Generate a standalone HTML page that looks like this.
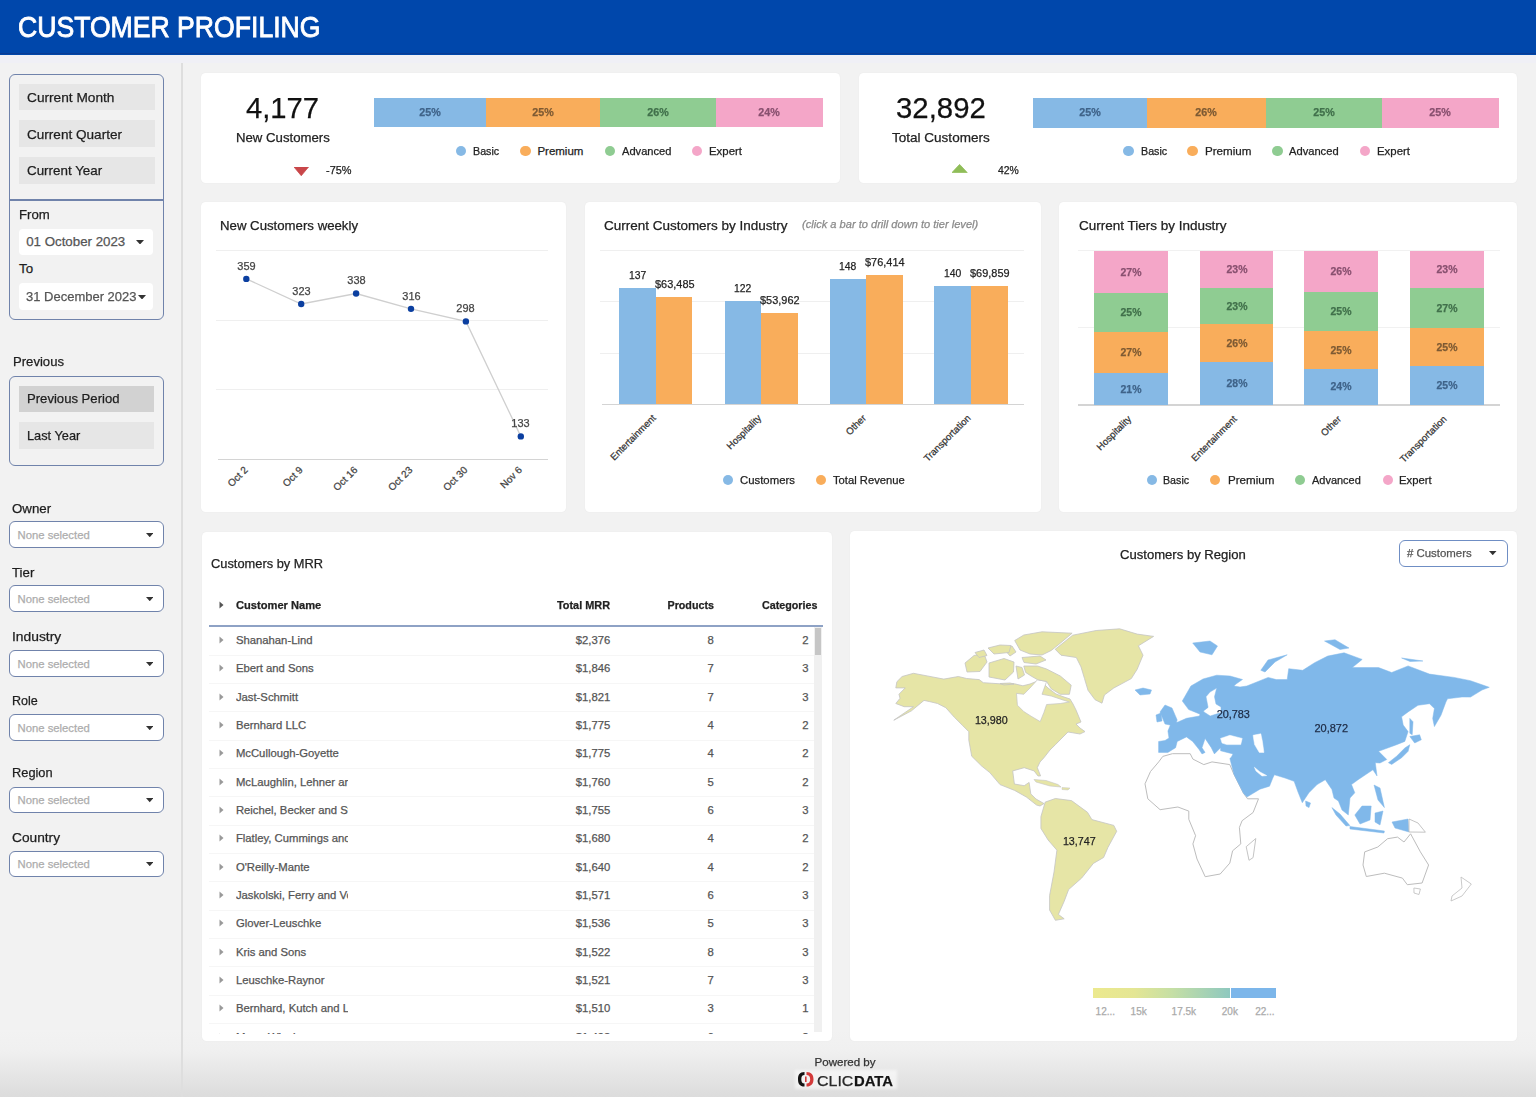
<!DOCTYPE html><html><head><meta charset="utf-8"><title>Customer Profiling</title>
<style>
html,body{margin:0;padding:0;}
body{width:1536px;height:1097px;position:relative;overflow:hidden;background:#f2f2f2;font-family:"Liberation Sans",sans-serif;}
.t{position:absolute;white-space:nowrap;line-height:1;-webkit-text-stroke:0.25px currentColor;}
.b{position:absolute;box-sizing:border-box;}
svg{position:absolute;left:0;top:0;}
</style></head><body>
<div class="b" style="left:0.00px;top:1030.00px;width:1536.00px;height:67.00px;background:linear-gradient(#f2f2f2,#f0f0f0 30%,#dcdcdc);"></div>
<div class="b" style="left:181.00px;top:62.00px;width:1.50px;height:1035.00px;background:#dedede;"></div>
<div class="b" style="left:0.00px;top:54.00px;width:1536.00px;height:9.00px;background:#f0f0f6;"></div>
<div class="b" style="left:0.00px;top:0.00px;width:1536.00px;height:54.50px;background:#0047ab;"></div>
<div class="b" style="left:0.00px;top:53.30px;width:1536.00px;height:1.20px;background:#0a3c94;"></div>
<div class="t" style="top:12.02px;font-size:30.20px;color:#fff;left:17.60px;transform-origin:0 0;transform:scaleX(0.8811);-webkit-text-stroke:0.9px #fff;">CUSTOMER PROFILING</div>
<div class="b" style="left:9.30px;top:73.70px;width:154.50px;height:246.60px;border:1.5px solid #7083ab;border-radius:6px;"></div>
<div class="b" style="left:19.00px;top:84.00px;width:135.50px;height:26.30px;background:#e6e6e6;"></div>
<div class="t" style="top:91.13px;font-size:13.30px;color:#1e1e1e;left:26.70px;transform-origin:0 0;transform:scaleX(1.0293);">Current Month</div>
<div class="b" style="left:19.00px;top:120.30px;width:135.50px;height:26.70px;background:#e6e6e6;"></div>
<div class="t" style="top:127.73px;font-size:13.30px;color:#1e1e1e;left:26.70px;transform-origin:0 0;transform:scaleX(1.0200);">Current Quarter</div>
<div class="b" style="left:19.00px;top:157.00px;width:135.50px;height:27.00px;background:#e6e6e6;"></div>
<div class="t" style="top:164.23px;font-size:13.30px;color:#1e1e1e;left:26.70px;transform-origin:0 0;transform:scaleX(1.0070);">Current Year</div>
<div class="b" style="left:9.30px;top:199.30px;width:154.50px;height:1.50px;background:#7083ab;"></div>
<div class="t" style="top:208.03px;font-size:13.30px;color:#1e1e1e;left:19.10px;transform-origin:0 0;transform:scaleX(0.9926);">From</div>
<div class="b" style="left:19.00px;top:228.50px;width:134.00px;height:26.50px;background:#fff;border-radius:4px;"></div>
<div class="t" style="top:235.43px;font-size:13.30px;color:#555;left:26.20px;transform-origin:0 0;">01 October 2023</div>
<svg style="left:136.00px;top:239.75px" width="8.00" height="4.50"><polygon points="0,0 8.00,0 4.00,4.50" fill="#333"/></svg>
<div class="t" style="top:262.33px;font-size:13.30px;color:#1e1e1e;left:19.10px;transform-origin:0 0;">To</div>
<div class="b" style="left:19.00px;top:283.00px;width:134.00px;height:27.00px;background:#fff;border-radius:4px;"></div>
<div class="t" style="top:289.73px;font-size:13.30px;color:#555;left:26.20px;transform-origin:0 0;transform:scaleX(0.9768);">31 December 2023</div>
<svg style="left:137.50px;top:294.75px" width="8.00" height="4.50"><polygon points="0,0 8.00,0 4.00,4.50" fill="#333"/></svg>
<div class="t" style="top:355.43px;font-size:13.30px;color:#1e1e1e;left:12.60px;transform-origin:0 0;transform:scaleX(0.9856);">Previous</div>
<div class="b" style="left:9.30px;top:375.50px;width:154.50px;height:90.80px;border:1.5px solid #7083ab;border-radius:6px;"></div>
<div class="b" style="left:19.00px;top:385.80px;width:135.30px;height:26.00px;background:#d2d2d2;"></div>
<div class="t" style="top:391.93px;font-size:13.30px;color:#1e1e1e;left:26.50px;transform-origin:0 0;transform:scaleX(0.9852);">Previous Period</div>
<div class="b" style="left:19.00px;top:422.00px;width:135.30px;height:26.70px;background:#e6e6e6;"></div>
<div class="t" style="top:428.53px;font-size:13.30px;color:#1e1e1e;left:26.50px;transform-origin:0 0;transform:scaleX(0.9609);">Last Year</div>
<div class="t" style="top:501.79px;font-size:13.00px;color:#1e1e1e;left:12.40px;transform-origin:0 0;transform:scaleX(1.0212);">Owner</div>
<div class="b" style="left:9.30px;top:521.40px;width:154.50px;height:27.10px;background:#fff;border:1.5px solid #7083ab;border-radius:6px;"></div>
<div class="t" style="top:530.18px;font-size:11.30px;color:#adadad;left:17.50px;transform-origin:0 0;">None selected</div>
<svg style="left:145.55px;top:533.15px" width="7.50" height="4.20"><polygon points="0,0 7.50,0 3.75,4.20" fill="#333"/></svg>
<div class="t" style="top:565.59px;font-size:13.00px;color:#1e1e1e;left:12.40px;transform-origin:0 0;transform:scaleX(1.0180);">Tier</div>
<div class="b" style="left:9.30px;top:585.40px;width:154.50px;height:26.90px;background:#fff;border:1.5px solid #7083ab;border-radius:6px;"></div>
<div class="t" style="top:594.08px;font-size:11.30px;color:#adadad;left:17.50px;transform-origin:0 0;">None selected</div>
<svg style="left:145.55px;top:597.05px" width="7.50" height="4.20"><polygon points="0,0 7.50,0 3.75,4.20" fill="#333"/></svg>
<div class="t" style="top:629.89px;font-size:13.00px;color:#1e1e1e;left:12.40px;transform-origin:0 0;transform:scaleX(1.0639);">Industry</div>
<div class="b" style="left:9.30px;top:650.00px;width:154.50px;height:26.80px;background:#fff;border:1.5px solid #7083ab;border-radius:6px;"></div>
<div class="t" style="top:658.63px;font-size:11.30px;color:#adadad;left:17.50px;transform-origin:0 0;">None selected</div>
<svg style="left:145.55px;top:661.60px" width="7.50" height="4.20"><polygon points="0,0 7.50,0 3.75,4.20" fill="#333"/></svg>
<div class="t" style="top:693.89px;font-size:13.00px;color:#1e1e1e;left:12.40px;transform-origin:0 0;transform:scaleX(0.9650);">Role</div>
<div class="b" style="left:9.30px;top:714.00px;width:154.50px;height:26.60px;background:#fff;border:1.5px solid #7083ab;border-radius:6px;"></div>
<div class="t" style="top:722.53px;font-size:11.30px;color:#adadad;left:17.50px;transform-origin:0 0;">None selected</div>
<svg style="left:145.55px;top:725.50px" width="7.50" height="4.20"><polygon points="0,0 7.50,0 3.75,4.20" fill="#333"/></svg>
<div class="t" style="top:766.39px;font-size:13.00px;color:#1e1e1e;left:12.40px;transform-origin:0 0;transform:scaleX(0.9855);">Region</div>
<div class="b" style="left:9.30px;top:786.80px;width:154.50px;height:26.70px;background:#fff;border:1.5px solid #7083ab;border-radius:6px;"></div>
<div class="t" style="top:795.38px;font-size:11.30px;color:#adadad;left:17.50px;transform-origin:0 0;">None selected</div>
<svg style="left:145.55px;top:798.35px" width="7.50" height="4.20"><polygon points="0,0 7.50,0 3.75,4.20" fill="#333"/></svg>
<div class="t" style="top:831.19px;font-size:13.00px;color:#1e1e1e;left:12.40px;transform-origin:0 0;transform:scaleX(1.0545);">Country</div>
<div class="b" style="left:9.30px;top:850.70px;width:154.50px;height:26.70px;background:#fff;border:1.5px solid #7083ab;border-radius:6px;"></div>
<div class="t" style="top:859.28px;font-size:11.30px;color:#adadad;left:17.50px;transform-origin:0 0;">None selected</div>
<svg style="left:145.55px;top:862.25px" width="7.50" height="4.20"><polygon points="0,0 7.50,0 3.75,4.20" fill="#333"/></svg>
<div class="b" style="left:201.30px;top:73.00px;width:639.20px;height:109.60px;background:#fff;border-radius:4.5px;box-shadow:0 0 1.5px rgba(0,0,0,0.06);"></div>
<div class="b" style="left:859.40px;top:73.00px;width:657.40px;height:109.60px;background:#fff;border-radius:4.5px;box-shadow:0 0 1.5px rgba(0,0,0,0.06);"></div>
<div class="b" style="left:201.00px;top:201.50px;width:365.20px;height:310.30px;background:#fff;border-radius:4.5px;box-shadow:0 0 1.5px rgba(0,0,0,0.06);"></div>
<div class="b" style="left:585.00px;top:201.50px;width:456.00px;height:310.30px;background:#fff;border-radius:4.5px;box-shadow:0 0 1.5px rgba(0,0,0,0.06);"></div>
<div class="b" style="left:1059.40px;top:201.50px;width:457.20px;height:310.30px;background:#fff;border-radius:4.5px;box-shadow:0 0 1.5px rgba(0,0,0,0.06);"></div>
<div class="b" style="left:201.50px;top:531.50px;width:630.30px;height:509.80px;background:#fff;border-radius:4.5px;box-shadow:0 0 1.5px rgba(0,0,0,0.06);"></div>
<div class="b" style="left:849.80px;top:530.50px;width:667.40px;height:510.80px;background:#fff;border-radius:4.5px;box-shadow:0 0 1.5px rgba(0,0,0,0.06);"></div>
<div class="t" style="top:92.59px;font-size:30.00px;color:#111;left:246.00px;transform-origin:0 0;transform:scaleX(0.9724);">4,177</div>
<div class="t" style="top:131.29px;font-size:13.00px;color:#222;left:236.20px;transform-origin:0 0;transform:scaleX(1.0144);">New Customers</div>
<svg style="left:294px;top:166.5px" width="15" height="9"><polygon points="0,0 14.5,0 7.25,8.7" fill="#c9474a" stroke="#c9474a" stroke-width="0.8" stroke-linejoin="round"/></svg>
<div class="t" style="top:164.68px;font-size:11.00px;color:#222;left:326.00px;transform-origin:0 0;transform:scaleX(0.9930);">-75%</div>
<div class="b" style="left:374.40px;top:97.80px;width:111.70px;height:29.70px;background:#86b9e5;"></div>
<div class="t" style="top:107.08px;font-size:11.00px;color:#3f6389;font-weight:700;left:419.24px;transform-origin:50% 0;transform:scaleX(0.9766);">25%</div>
<div class="b" style="left:486.10px;top:97.80px;width:113.90px;height:29.70px;background:#f9ad5b;"></div>
<div class="t" style="top:107.08px;font-size:11.00px;color:#7d5a33;font-weight:700;left:532.04px;transform-origin:50% 0;transform:scaleX(0.9766);">25%</div>
<div class="b" style="left:600.00px;top:97.80px;width:115.60px;height:29.70px;background:#8fcc92;"></div>
<div class="t" style="top:107.08px;font-size:11.00px;color:#41704b;font-weight:700;left:646.79px;transform-origin:50% 0;transform:scaleX(0.9766);">26%</div>
<div class="b" style="left:715.60px;top:97.80px;width:107.10px;height:29.70px;background:#f4a6c8;"></div>
<div class="t" style="top:107.08px;font-size:11.00px;color:#88506f;font-weight:700;left:758.14px;transform-origin:50% 0;transform:scaleX(0.9766);">24%</div>
<div class="b" style="left:455.80px;top:145.90px;width:10.60px;height:10.60px;border-radius:50%;background:#86b9e5"></div>
<div class="t" style="top:146.46px;font-size:11.50px;color:#222;left:473.40px;transform-origin:0 0;transform:scaleX(0.9317);">Basic</div>
<div class="b" style="left:520.20px;top:145.90px;width:10.60px;height:10.60px;border-radius:50%;background:#f9ad5b"></div>
<div class="t" style="top:146.46px;font-size:11.50px;color:#222;left:537.40px;transform-origin:0 0;">Premium</div>
<div class="b" style="left:604.60px;top:145.90px;width:10.60px;height:10.60px;border-radius:50%;background:#8fcc92"></div>
<div class="t" style="top:146.46px;font-size:11.50px;color:#222;left:621.80px;transform-origin:0 0;transform:scaleX(0.9658);">Advanced</div>
<div class="b" style="left:691.80px;top:145.90px;width:10.60px;height:10.60px;border-radius:50%;background:#f4a6c8"></div>
<div class="t" style="top:146.46px;font-size:11.50px;color:#222;left:709.30px;transform-origin:0 0;transform:scaleX(0.9929);">Expert</div>
<div class="t" style="top:92.59px;font-size:30.00px;color:#111;left:896.20px;transform-origin:0 0;transform:scaleX(0.9787);">32,892</div>
<div class="t" style="top:131.29px;font-size:13.00px;color:#222;left:892.30px;transform-origin:0 0;transform:scaleX(1.0402);">Total Customers</div>
<svg style="left:952px;top:163.5px" width="16" height="9"><polygon points="7.6,0.4 15.2,8.6 0,8.6" fill="#8fbd58" stroke="#8fbd58" stroke-width="0.8" stroke-linejoin="round"/></svg>
<div class="t" style="top:164.68px;font-size:11.00px;color:#222;left:997.80px;transform-origin:0 0;transform:scaleX(0.9448);">42%</div>
<div class="b" style="left:1033.00px;top:98.00px;width:114.00px;height:29.50px;background:#86b9e5;"></div>
<div class="t" style="top:107.08px;font-size:11.00px;color:#3f6389;font-weight:700;left:1078.99px;transform-origin:50% 0;transform:scaleX(0.9766);">25%</div>
<div class="b" style="left:1147.00px;top:98.00px;width:119.00px;height:29.50px;background:#f9ad5b;"></div>
<div class="t" style="top:107.08px;font-size:11.00px;color:#7d5a33;font-weight:700;left:1195.49px;transform-origin:50% 0;transform:scaleX(0.9766);">26%</div>
<div class="b" style="left:1266.00px;top:98.00px;width:116.00px;height:29.50px;background:#8fcc92;"></div>
<div class="t" style="top:107.08px;font-size:11.00px;color:#41704b;font-weight:700;left:1312.99px;transform-origin:50% 0;transform:scaleX(0.9766);">25%</div>
<div class="b" style="left:1382.00px;top:98.00px;width:117.00px;height:29.50px;background:#f4a6c8;"></div>
<div class="t" style="top:107.08px;font-size:11.00px;color:#88506f;font-weight:700;left:1429.49px;transform-origin:50% 0;transform:scaleX(0.9766);">25%</div>
<div class="b" style="left:1123.20px;top:145.90px;width:10.60px;height:10.60px;border-radius:50%;background:#86b9e5"></div>
<div class="t" style="top:146.36px;font-size:11.50px;color:#222;left:1141.00px;transform-origin:0 0;transform:scaleX(0.9317);">Basic</div>
<div class="b" style="left:1187.30px;top:145.90px;width:10.60px;height:10.60px;border-radius:50%;background:#f9ad5b"></div>
<div class="t" style="top:146.36px;font-size:11.50px;color:#222;left:1204.50px;transform-origin:0 0;transform:scaleX(1.0107);">Premium</div>
<div class="b" style="left:1272.00px;top:145.90px;width:10.60px;height:10.60px;border-radius:50%;background:#8fcc92"></div>
<div class="t" style="top:146.36px;font-size:11.50px;color:#222;left:1289.40px;transform-origin:0 0;transform:scaleX(0.9697);">Advanced</div>
<div class="b" style="left:1359.50px;top:145.90px;width:10.60px;height:10.60px;border-radius:50%;background:#f4a6c8"></div>
<div class="t" style="top:146.36px;font-size:11.50px;color:#222;left:1376.80px;transform-origin:0 0;transform:scaleX(0.9929);">Expert</div>
<div class="t" style="top:219.09px;font-size:13.00px;color:#222;left:219.70px;transform-origin:0 0;transform:scaleX(1.0162);">New Customers weekly</div>
<div class="b" style="left:216.00px;top:249.80px;width:331.50px;height:1.00px;background:#efefef;"></div>
<div class="b" style="left:216.00px;top:320.00px;width:331.50px;height:1.00px;background:#efefef;"></div>
<div class="b" style="left:216.00px;top:388.90px;width:331.50px;height:1.00px;background:#efefef;"></div>
<div class="b" style="left:218.00px;top:458.95px;width:329.50px;height:1.30px;background:#d4d4d4;"></div>
<svg width="1536" height="1097" style="pointer-events:none"><polyline points="246.30,278.88 301.20,303.97 356.10,293.51 411.00,308.85 465.90,321.39 520.80,436.40" fill="none" stroke="#cfcfcf" stroke-width="1.3"/><circle cx="246.30" cy="278.88" r="3.2" fill="#0b3fa0"/><circle cx="301.20" cy="303.97" r="3.2" fill="#0b3fa0"/><circle cx="356.10" cy="293.51" r="3.2" fill="#0b3fa0"/><circle cx="411.00" cy="308.85" r="3.2" fill="#0b3fa0"/><circle cx="465.90" cy="321.39" r="3.2" fill="#0b3fa0"/><circle cx="520.80" cy="436.40" r="3.2" fill="#0b3fa0"/></svg>
<div class="t" style="top:260.81px;font-size:11.30px;color:#444;left:236.87px;transform-origin:50% 0;transform:scaleX(0.9706);">359</div>
<div class="t" style="top:285.90px;font-size:11.30px;color:#444;left:291.77px;transform-origin:50% 0;transform:scaleX(0.9706);">323</div>
<div class="t" style="top:275.44px;font-size:11.30px;color:#444;left:346.67px;transform-origin:50% 0;transform:scaleX(0.9706);">338</div>
<div class="t" style="top:290.78px;font-size:11.30px;color:#444;left:401.57px;transform-origin:50% 0;transform:scaleX(0.9706);">316</div>
<div class="t" style="top:303.32px;font-size:11.30px;color:#444;left:456.47px;transform-origin:50% 0;transform:scaleX(0.9706);">298</div>
<div class="t" style="top:418.33px;font-size:11.30px;color:#444;left:511.37px;transform-origin:50% 0;transform:scaleX(0.9706);">133</div>
<div class="t" style="left:218.90px;top:464.50px;font-size:10.00px;color:#444;width:23.90px;text-align:right;transform-origin:100% 0;transform:rotate(-45deg);">Oct 2</div>
<div class="t" style="left:273.80px;top:464.50px;font-size:10.00px;color:#444;width:23.90px;text-align:right;transform-origin:100% 0;transform:rotate(-45deg);">Oct 9</div>
<div class="t" style="left:323.14px;top:464.50px;font-size:10.00px;color:#444;width:29.46px;text-align:right;transform-origin:100% 0;transform:rotate(-45deg);">Oct 16</div>
<div class="t" style="left:378.04px;top:464.50px;font-size:10.00px;color:#444;width:29.46px;text-align:right;transform-origin:100% 0;transform:rotate(-45deg);">Oct 23</div>
<div class="t" style="left:432.94px;top:464.50px;font-size:10.00px;color:#444;width:29.46px;text-align:right;transform-origin:100% 0;transform:rotate(-45deg);">Oct 30</div>
<div class="t" style="left:491.18px;top:464.50px;font-size:10.00px;color:#444;width:26.12px;text-align:right;transform-origin:100% 0;transform:rotate(-45deg);">Nov 6</div>
<div class="t" style="top:218.99px;font-size:13.00px;color:#222;left:603.50px;transform-origin:0 0;transform:scaleX(1.0367);">Current Customers by Industry</div>
<div class="t" style="top:218.68px;font-size:11.00px;color:#8a8a8a;font-style:italic;left:802.20px;transform-origin:0 0;transform:scaleX(1.0078);">(click a bar to drill down to tier level)</div>
<div class="b" style="left:600.00px;top:250.10px;width:424.00px;height:1.00px;background:#efefef;"></div>
<div class="b" style="left:600.00px;top:301.30px;width:424.00px;height:1.00px;background:#efefef;"></div>
<div class="b" style="left:600.00px;top:352.50px;width:424.00px;height:1.00px;background:#efefef;"></div>
<div class="b" style="left:602.00px;top:403.95px;width:422.00px;height:1.30px;background:#d4d4d4;"></div>
<div class="b" style="left:619.20px;top:288.40px;width:36.60px;height:115.60px;background:#86b9e5;"></div>
<div class="b" style="left:655.80px;top:296.58px;width:36.60px;height:107.42px;background:#f9ad5b;"></div>
<div class="t" style="top:270.36px;font-size:11.50px;color:#222;left:627.91px;transform-origin:50% 0;transform:scaleX(0.9016);">137</div>
<div class="t" style="top:278.64px;font-size:11.50px;color:#222;left:653.82px;transform-origin:50% 0;transform:scaleX(0.9502);">$63,485</div>
<div class="t" style="left:591.03px;top:413.00px;font-size:9.60px;color:#333;width:59.77px;text-align:right;transform-origin:100% 0;transform:rotate(-45deg);">Entertainment</div>
<div class="b" style="left:724.50px;top:301.06px;width:36.60px;height:102.94px;background:#86b9e5;"></div>
<div class="b" style="left:761.10px;top:312.70px;width:36.60px;height:91.30px;background:#f9ad5b;"></div>
<div class="t" style="top:283.02px;font-size:11.50px;color:#222;left:733.21px;transform-origin:50% 0;transform:scaleX(0.9016);">122</div>
<div class="t" style="top:294.76px;font-size:11.50px;color:#222;left:759.12px;transform-origin:50% 0;transform:scaleX(0.9502);">$53,962</div>
<div class="t" style="left:711.82px;top:413.00px;font-size:9.60px;color:#333;width:44.28px;text-align:right;transform-origin:100% 0;transform:rotate(-45deg);">Hospitality</div>
<div class="b" style="left:829.60px;top:279.12px;width:36.60px;height:124.88px;background:#86b9e5;"></div>
<div class="b" style="left:866.20px;top:274.71px;width:36.60px;height:129.29px;background:#f9ad5b;"></div>
<div class="t" style="top:261.08px;font-size:11.50px;color:#222;left:838.31px;transform-origin:50% 0;transform:scaleX(0.9016);">148</div>
<div class="t" style="top:256.77px;font-size:11.50px;color:#222;left:864.22px;transform-origin:50% 0;transform:scaleX(0.9502);">$76,414</div>
<div class="t" style="left:837.19px;top:413.00px;font-size:9.60px;color:#333;width:24.01px;text-align:right;transform-origin:100% 0;transform:rotate(-45deg);">Other</div>
<div class="b" style="left:934.40px;top:285.87px;width:36.60px;height:118.13px;background:#86b9e5;"></div>
<div class="b" style="left:971.00px;top:285.80px;width:36.60px;height:118.20px;background:#f9ad5b;"></div>
<div class="t" style="top:267.83px;font-size:11.50px;color:#222;left:943.11px;transform-origin:50% 0;transform:scaleX(0.9016);">140</div>
<div class="t" style="top:267.86px;font-size:11.50px;color:#222;left:969.02px;transform-origin:50% 0;transform:scaleX(0.9502);">$69,859</div>
<div class="t" style="left:904.46px;top:413.00px;font-size:9.60px;color:#333;width:61.54px;text-align:right;transform-origin:100% 0;transform:rotate(-45deg);">Transportation</div>
<div class="b" style="left:723.20px;top:475.40px;width:10.00px;height:10.00px;border-radius:50%;background:#86b9e5"></div>
<div class="t" style="top:475.16px;font-size:11.50px;color:#222;left:740.30px;transform-origin:0 0;transform:scaleX(0.9875);">Customers</div>
<div class="b" style="left:816.00px;top:475.40px;width:10.00px;height:10.00px;border-radius:50%;background:#f9ad5b"></div>
<div class="t" style="top:475.16px;font-size:11.50px;color:#222;left:833.20px;transform-origin:0 0;transform:scaleX(0.9766);">Total Revenue</div>
<div class="t" style="top:219.29px;font-size:13.00px;color:#222;left:1079.00px;transform-origin:0 0;transform:scaleX(1.0370);">Current Tiers by Industry</div>
<div class="b" style="left:1078.00px;top:250.00px;width:421.50px;height:1.00px;background:#f1f1f1;"></div>
<div class="b" style="left:1078.00px;top:327.30px;width:421.50px;height:1.00px;background:#f1f1f1;"></div>
<div class="b" style="left:1078.00px;top:404.35px;width:421.50px;height:1.30px;background:#d4d4d4;"></div>
<div class="b" style="left:1094.00px;top:372.70px;width:73.60px;height:31.90px;background:#86b9e5;"></div>
<div class="t" style="top:383.68px;font-size:11.00px;color:#3f6389;font-weight:700;left:1119.79px;transform-origin:50% 0;transform:scaleX(0.9538);">21%</div>
<div class="b" style="left:1094.00px;top:330.80px;width:73.60px;height:42.60px;background:#f9ad5b;"></div>
<div class="t" style="top:347.13px;font-size:11.00px;color:#7d5a33;font-weight:700;left:1119.79px;transform-origin:50% 0;transform:scaleX(0.9538);">27%</div>
<div class="b" style="left:1094.00px;top:292.00px;width:73.60px;height:39.50px;background:#8fcc92;"></div>
<div class="t" style="top:306.78px;font-size:11.00px;color:#41704b;font-weight:700;left:1119.79px;transform-origin:50% 0;transform:scaleX(0.9538);">25%</div>
<div class="b" style="left:1094.00px;top:251.00px;width:73.60px;height:41.70px;background:#f4a6c8;"></div>
<div class="t" style="top:266.53px;font-size:11.00px;color:#88506f;font-weight:700;left:1119.79px;transform-origin:50% 0;transform:scaleX(0.9538);">27%</div>
<div class="t" style="left:1081.52px;top:413.50px;font-size:9.60px;color:#333;width:44.28px;text-align:right;transform-origin:100% 0;transform:rotate(-45deg);">Hospitality</div>
<div class="b" style="left:1199.90px;top:361.60px;width:73.60px;height:43.00px;background:#86b9e5;"></div>
<div class="t" style="top:378.13px;font-size:11.00px;color:#3f6389;font-weight:700;left:1225.69px;transform-origin:50% 0;transform:scaleX(0.9538);">28%</div>
<div class="b" style="left:1199.90px;top:323.50px;width:73.60px;height:38.80px;background:#f9ad5b;"></div>
<div class="t" style="top:337.93px;font-size:11.00px;color:#7d5a33;font-weight:700;left:1225.69px;transform-origin:50% 0;transform:scaleX(0.9538);">26%</div>
<div class="b" style="left:1199.90px;top:286.80px;width:73.60px;height:37.40px;background:#8fcc92;"></div>
<div class="t" style="top:300.53px;font-size:11.00px;color:#41704b;font-weight:700;left:1225.69px;transform-origin:50% 0;transform:scaleX(0.9538);">23%</div>
<div class="b" style="left:1199.90px;top:251.00px;width:73.60px;height:36.50px;background:#f4a6c8;"></div>
<div class="t" style="top:263.93px;font-size:11.00px;color:#88506f;font-weight:700;left:1225.69px;transform-origin:50% 0;transform:scaleX(0.9538);">23%</div>
<div class="t" style="left:1171.93px;top:413.50px;font-size:9.60px;color:#333;width:59.77px;text-align:right;transform-origin:100% 0;transform:rotate(-45deg);">Entertainment</div>
<div class="b" style="left:1304.30px;top:368.00px;width:73.60px;height:36.60px;background:#86b9e5;"></div>
<div class="t" style="top:381.33px;font-size:11.00px;color:#3f6389;font-weight:700;left:1330.09px;transform-origin:50% 0;transform:scaleX(0.9538);">24%</div>
<div class="b" style="left:1304.30px;top:330.30px;width:73.60px;height:38.40px;background:#f9ad5b;"></div>
<div class="t" style="top:344.53px;font-size:11.00px;color:#7d5a33;font-weight:700;left:1330.09px;transform-origin:50% 0;transform:scaleX(0.9538);">25%</div>
<div class="b" style="left:1304.30px;top:291.40px;width:73.60px;height:39.60px;background:#8fcc92;"></div>
<div class="t" style="top:306.23px;font-size:11.00px;color:#41704b;font-weight:700;left:1330.09px;transform-origin:50% 0;transform:scaleX(0.9538);">25%</div>
<div class="b" style="left:1304.30px;top:251.00px;width:73.60px;height:41.10px;background:#f4a6c8;"></div>
<div class="t" style="top:266.23px;font-size:11.00px;color:#88506f;font-weight:700;left:1330.09px;transform-origin:50% 0;transform:scaleX(0.9538);">26%</div>
<div class="t" style="left:1312.09px;top:413.50px;font-size:9.60px;color:#333;width:24.01px;text-align:right;transform-origin:100% 0;transform:rotate(-45deg);">Other</div>
<div class="b" style="left:1410.00px;top:365.50px;width:73.60px;height:39.10px;background:#86b9e5;"></div>
<div class="t" style="top:380.08px;font-size:11.00px;color:#3f6389;font-weight:700;left:1435.79px;transform-origin:50% 0;transform:scaleX(0.9538);">25%</div>
<div class="b" style="left:1410.00px;top:327.70px;width:73.60px;height:38.50px;background:#f9ad5b;"></div>
<div class="t" style="top:341.98px;font-size:11.00px;color:#7d5a33;font-weight:700;left:1435.79px;transform-origin:50% 0;transform:scaleX(0.9538);">25%</div>
<div class="b" style="left:1410.00px;top:286.80px;width:73.60px;height:41.60px;background:#8fcc92;"></div>
<div class="t" style="top:302.63px;font-size:11.00px;color:#41704b;font-weight:700;left:1435.79px;transform-origin:50% 0;transform:scaleX(0.9538);">27%</div>
<div class="b" style="left:1410.00px;top:251.00px;width:73.60px;height:36.50px;background:#f4a6c8;"></div>
<div class="t" style="top:263.93px;font-size:11.00px;color:#88506f;font-weight:700;left:1435.79px;transform-origin:50% 0;transform:scaleX(0.9538);">23%</div>
<div class="t" style="left:1380.26px;top:413.50px;font-size:9.60px;color:#333;width:61.54px;text-align:right;transform-origin:100% 0;transform:rotate(-45deg);">Transportation</div>
<div class="b" style="left:1146.60px;top:475.40px;width:10.00px;height:10.00px;border-radius:50%;background:#86b9e5"></div>
<div class="t" style="top:475.16px;font-size:11.50px;color:#222;left:1163.30px;transform-origin:0 0;transform:scaleX(0.9281);">Basic</div>
<div class="b" style="left:1210.20px;top:475.40px;width:10.00px;height:10.00px;border-radius:50%;background:#f9ad5b"></div>
<div class="t" style="top:475.16px;font-size:11.50px;color:#222;left:1227.70px;transform-origin:0 0;transform:scaleX(1.0086);">Premium</div>
<div class="b" style="left:1295.00px;top:475.40px;width:10.00px;height:10.00px;border-radius:50%;background:#8fcc92"></div>
<div class="t" style="top:475.16px;font-size:11.50px;color:#222;left:1312.20px;transform-origin:0 0;transform:scaleX(0.9541);">Advanced</div>
<div class="b" style="left:1382.80px;top:475.40px;width:10.00px;height:10.00px;border-radius:50%;background:#f4a6c8"></div>
<div class="t" style="top:475.16px;font-size:11.50px;color:#222;left:1399.30px;transform-origin:0 0;transform:scaleX(0.9838);">Expert</div>
<div class="t" style="top:556.89px;font-size:13.00px;color:#222;left:210.50px;transform-origin:0 0;transform:scaleX(0.9879);">Customers by MRR</div>
<svg style="left:219.30px;top:601.00px" width="5" height="8"><polygon points="0.5,0.5 4.5,4 0.5,7.5" fill="#555"/></svg>
<div class="t" style="top:599.83px;font-size:11.30px;color:#222;font-weight:700;left:235.90px;transform-origin:0 0;transform:scaleX(0.9843);">Customer Name</div>
<div class="t" style="top:599.73px;font-size:11.30px;color:#222;font-weight:700;left:555.27px;transform-origin:100% 0;transform:scaleX(0.9650);">Total MRR</div>
<div class="t" style="top:599.73px;font-size:11.30px;color:#222;font-weight:700;left:664.73px;transform-origin:100% 0;transform:scaleX(0.9495);">Products</div>
<div class="t" style="top:599.73px;font-size:11.30px;color:#222;font-weight:700;left:759.20px;transform-origin:100% 0;transform:scaleX(0.9503);">Categories</div>
<div class="b" style="left:209.40px;top:625.00px;width:613.20px;height:2.00px;background:#8ea2c5;"></div>
<div class="b" style="left:209px;top:627px;width:605px;height:406.5px;overflow:hidden;">
<div class="b" style="left:0;top:27.80px;width:605px;height:1px;background:#f6f6f6"></div>
<svg style="left:10.3px;top:9.00px" width="5" height="8"><polygon points="0.5,0.5 4.5,4 0.5,7.5" fill="#999"/></svg>
<div class="b" style="left:26.9px;top:5.93px;width:112.10px;height:16px;overflow:hidden;">
<div class="t" style="left:0;top:2px;font-size:11.30px;color:#555;transform-origin:0 0;transform:scaleX(1.0)">Shanahan-Lind</div></div>
<div class="t" style="left:366.74px;top:7.93px;font-size:11.30px;color:#555;transform-origin:100% 0;transform:scaleX(1.0000)">$2,376</div>
<div class="t" style="left:498.42px;top:7.93px;font-size:11.30px;color:#555;transform-origin:100% 0;transform:scaleX(1.0000)">8</div>
<div class="t" style="left:593.22px;top:7.93px;font-size:11.30px;color:#555;transform-origin:100% 0;transform:scaleX(1.0000)">2</div>
<div class="b" style="left:0;top:56.13px;width:605px;height:1px;background:#f6f6f6"></div>
<svg style="left:10.3px;top:37.33px" width="5" height="8"><polygon points="0.5,0.5 4.5,4 0.5,7.5" fill="#999"/></svg>
<div class="b" style="left:26.9px;top:34.26px;width:112.10px;height:16px;overflow:hidden;">
<div class="t" style="left:0;top:2px;font-size:11.30px;color:#555;transform-origin:0 0;transform:scaleX(1.0)">Ebert and Sons</div></div>
<div class="t" style="left:366.74px;top:36.26px;font-size:11.30px;color:#555;transform-origin:100% 0;transform:scaleX(1.0000)">$1,846</div>
<div class="t" style="left:498.42px;top:36.26px;font-size:11.30px;color:#555;transform-origin:100% 0;transform:scaleX(1.0000)">7</div>
<div class="t" style="left:593.22px;top:36.26px;font-size:11.30px;color:#555;transform-origin:100% 0;transform:scaleX(1.0000)">3</div>
<div class="b" style="left:0;top:84.46px;width:605px;height:1px;background:#f6f6f6"></div>
<svg style="left:10.3px;top:65.66px" width="5" height="8"><polygon points="0.5,0.5 4.5,4 0.5,7.5" fill="#999"/></svg>
<div class="b" style="left:26.9px;top:62.59px;width:112.10px;height:16px;overflow:hidden;">
<div class="t" style="left:0;top:2px;font-size:11.30px;color:#555;transform-origin:0 0;transform:scaleX(1.0)">Jast-Schmitt</div></div>
<div class="t" style="left:366.74px;top:64.59px;font-size:11.30px;color:#555;transform-origin:100% 0;transform:scaleX(1.0000)">$1,821</div>
<div class="t" style="left:498.42px;top:64.59px;font-size:11.30px;color:#555;transform-origin:100% 0;transform:scaleX(1.0000)">7</div>
<div class="t" style="left:593.22px;top:64.59px;font-size:11.30px;color:#555;transform-origin:100% 0;transform:scaleX(1.0000)">3</div>
<div class="b" style="left:0;top:112.79px;width:605px;height:1px;background:#f6f6f6"></div>
<svg style="left:10.3px;top:93.99px" width="5" height="8"><polygon points="0.5,0.5 4.5,4 0.5,7.5" fill="#999"/></svg>
<div class="b" style="left:26.9px;top:90.92px;width:112.10px;height:16px;overflow:hidden;">
<div class="t" style="left:0;top:2px;font-size:11.30px;color:#555;transform-origin:0 0;transform:scaleX(1.0)">Bernhard LLC</div></div>
<div class="t" style="left:366.74px;top:92.92px;font-size:11.30px;color:#555;transform-origin:100% 0;transform:scaleX(1.0000)">$1,775</div>
<div class="t" style="left:498.42px;top:92.92px;font-size:11.30px;color:#555;transform-origin:100% 0;transform:scaleX(1.0000)">4</div>
<div class="t" style="left:593.22px;top:92.92px;font-size:11.30px;color:#555;transform-origin:100% 0;transform:scaleX(1.0000)">2</div>
<div class="b" style="left:0;top:141.12px;width:605px;height:1px;background:#f6f6f6"></div>
<svg style="left:10.3px;top:122.32px" width="5" height="8"><polygon points="0.5,0.5 4.5,4 0.5,7.5" fill="#999"/></svg>
<div class="b" style="left:26.9px;top:119.25px;width:112.10px;height:16px;overflow:hidden;">
<div class="t" style="left:0;top:2px;font-size:11.30px;color:#555;transform-origin:0 0;transform:scaleX(1.0)">McCullough-Goyette</div></div>
<div class="t" style="left:366.74px;top:121.25px;font-size:11.30px;color:#555;transform-origin:100% 0;transform:scaleX(1.0000)">$1,775</div>
<div class="t" style="left:498.42px;top:121.25px;font-size:11.30px;color:#555;transform-origin:100% 0;transform:scaleX(1.0000)">4</div>
<div class="t" style="left:593.22px;top:121.25px;font-size:11.30px;color:#555;transform-origin:100% 0;transform:scaleX(1.0000)">2</div>
<div class="b" style="left:0;top:169.45px;width:605px;height:1px;background:#f6f6f6"></div>
<svg style="left:10.3px;top:150.65px" width="5" height="8"><polygon points="0.5,0.5 4.5,4 0.5,7.5" fill="#999"/></svg>
<div class="b" style="left:26.9px;top:147.58px;width:112.10px;height:16px;overflow:hidden;">
<div class="t" style="left:0;top:2px;font-size:11.30px;color:#555;transform-origin:0 0;transform:scaleX(1.0)">McLaughlin, Lehner and Mohr</div></div>
<div class="t" style="left:366.74px;top:149.58px;font-size:11.30px;color:#555;transform-origin:100% 0;transform:scaleX(1.0000)">$1,760</div>
<div class="t" style="left:498.42px;top:149.58px;font-size:11.30px;color:#555;transform-origin:100% 0;transform:scaleX(1.0000)">5</div>
<div class="t" style="left:593.22px;top:149.58px;font-size:11.30px;color:#555;transform-origin:100% 0;transform:scaleX(1.0000)">2</div>
<div class="b" style="left:0;top:197.78px;width:605px;height:1px;background:#f6f6f6"></div>
<svg style="left:10.3px;top:178.98px" width="5" height="8"><polygon points="0.5,0.5 4.5,4 0.5,7.5" fill="#999"/></svg>
<div class="b" style="left:26.9px;top:175.91px;width:112.10px;height:16px;overflow:hidden;">
<div class="t" style="left:0;top:2px;font-size:11.30px;color:#555;transform-origin:0 0;transform:scaleX(1.0)">Reichel, Becker and Stanton</div></div>
<div class="t" style="left:366.74px;top:177.91px;font-size:11.30px;color:#555;transform-origin:100% 0;transform:scaleX(1.0000)">$1,755</div>
<div class="t" style="left:498.42px;top:177.91px;font-size:11.30px;color:#555;transform-origin:100% 0;transform:scaleX(1.0000)">6</div>
<div class="t" style="left:593.22px;top:177.91px;font-size:11.30px;color:#555;transform-origin:100% 0;transform:scaleX(1.0000)">3</div>
<div class="b" style="left:0;top:226.11px;width:605px;height:1px;background:#f6f6f6"></div>
<svg style="left:10.3px;top:207.31px" width="5" height="8"><polygon points="0.5,0.5 4.5,4 0.5,7.5" fill="#999"/></svg>
<div class="b" style="left:26.9px;top:204.24px;width:112.10px;height:16px;overflow:hidden;">
<div class="t" style="left:0;top:2px;font-size:11.30px;color:#555;transform-origin:0 0;transform:scaleX(1.0)">Flatley, Cummings and Hane</div></div>
<div class="t" style="left:366.74px;top:206.24px;font-size:11.30px;color:#555;transform-origin:100% 0;transform:scaleX(1.0000)">$1,680</div>
<div class="t" style="left:498.42px;top:206.24px;font-size:11.30px;color:#555;transform-origin:100% 0;transform:scaleX(1.0000)">4</div>
<div class="t" style="left:593.22px;top:206.24px;font-size:11.30px;color:#555;transform-origin:100% 0;transform:scaleX(1.0000)">2</div>
<div class="b" style="left:0;top:254.44px;width:605px;height:1px;background:#f6f6f6"></div>
<svg style="left:10.3px;top:235.64px" width="5" height="8"><polygon points="0.5,0.5 4.5,4 0.5,7.5" fill="#999"/></svg>
<div class="b" style="left:26.9px;top:232.57px;width:112.10px;height:16px;overflow:hidden;">
<div class="t" style="left:0;top:2px;font-size:11.30px;color:#555;transform-origin:0 0;transform:scaleX(1.0)">O'Reilly-Mante</div></div>
<div class="t" style="left:366.74px;top:234.57px;font-size:11.30px;color:#555;transform-origin:100% 0;transform:scaleX(1.0000)">$1,640</div>
<div class="t" style="left:498.42px;top:234.57px;font-size:11.30px;color:#555;transform-origin:100% 0;transform:scaleX(1.0000)">4</div>
<div class="t" style="left:593.22px;top:234.57px;font-size:11.30px;color:#555;transform-origin:100% 0;transform:scaleX(1.0000)">2</div>
<div class="b" style="left:0;top:282.77px;width:605px;height:1px;background:#f6f6f6"></div>
<svg style="left:10.3px;top:263.97px" width="5" height="8"><polygon points="0.5,0.5 4.5,4 0.5,7.5" fill="#999"/></svg>
<div class="b" style="left:26.9px;top:260.90px;width:112.10px;height:16px;overflow:hidden;">
<div class="t" style="left:0;top:2px;font-size:11.30px;color:#555;transform-origin:0 0;transform:scaleX(1.0)">Jaskolski, Ferry and Von</div></div>
<div class="t" style="left:366.74px;top:262.90px;font-size:11.30px;color:#555;transform-origin:100% 0;transform:scaleX(1.0000)">$1,571</div>
<div class="t" style="left:498.42px;top:262.90px;font-size:11.30px;color:#555;transform-origin:100% 0;transform:scaleX(1.0000)">6</div>
<div class="t" style="left:593.22px;top:262.90px;font-size:11.30px;color:#555;transform-origin:100% 0;transform:scaleX(1.0000)">3</div>
<div class="b" style="left:0;top:311.10px;width:605px;height:1px;background:#f6f6f6"></div>
<svg style="left:10.3px;top:292.30px" width="5" height="8"><polygon points="0.5,0.5 4.5,4 0.5,7.5" fill="#999"/></svg>
<div class="b" style="left:26.9px;top:289.23px;width:112.10px;height:16px;overflow:hidden;">
<div class="t" style="left:0;top:2px;font-size:11.30px;color:#555;transform-origin:0 0;transform:scaleX(1.0)">Glover-Leuschke</div></div>
<div class="t" style="left:366.74px;top:291.23px;font-size:11.30px;color:#555;transform-origin:100% 0;transform:scaleX(1.0000)">$1,536</div>
<div class="t" style="left:498.42px;top:291.23px;font-size:11.30px;color:#555;transform-origin:100% 0;transform:scaleX(1.0000)">5</div>
<div class="t" style="left:593.22px;top:291.23px;font-size:11.30px;color:#555;transform-origin:100% 0;transform:scaleX(1.0000)">3</div>
<div class="b" style="left:0;top:339.43px;width:605px;height:1px;background:#f6f6f6"></div>
<svg style="left:10.3px;top:320.63px" width="5" height="8"><polygon points="0.5,0.5 4.5,4 0.5,7.5" fill="#999"/></svg>
<div class="b" style="left:26.9px;top:317.56px;width:112.10px;height:16px;overflow:hidden;">
<div class="t" style="left:0;top:2px;font-size:11.30px;color:#555;transform-origin:0 0;transform:scaleX(1.0)">Kris and Sons</div></div>
<div class="t" style="left:366.74px;top:319.56px;font-size:11.30px;color:#555;transform-origin:100% 0;transform:scaleX(1.0000)">$1,522</div>
<div class="t" style="left:498.42px;top:319.56px;font-size:11.30px;color:#555;transform-origin:100% 0;transform:scaleX(1.0000)">8</div>
<div class="t" style="left:593.22px;top:319.56px;font-size:11.30px;color:#555;transform-origin:100% 0;transform:scaleX(1.0000)">3</div>
<div class="b" style="left:0;top:367.76px;width:605px;height:1px;background:#f6f6f6"></div>
<svg style="left:10.3px;top:348.96px" width="5" height="8"><polygon points="0.5,0.5 4.5,4 0.5,7.5" fill="#999"/></svg>
<div class="b" style="left:26.9px;top:345.89px;width:112.10px;height:16px;overflow:hidden;">
<div class="t" style="left:0;top:2px;font-size:11.30px;color:#555;transform-origin:0 0;transform:scaleX(1.0)">Leuschke-Raynor</div></div>
<div class="t" style="left:366.74px;top:347.89px;font-size:11.30px;color:#555;transform-origin:100% 0;transform:scaleX(1.0000)">$1,521</div>
<div class="t" style="left:498.42px;top:347.89px;font-size:11.30px;color:#555;transform-origin:100% 0;transform:scaleX(1.0000)">7</div>
<div class="t" style="left:593.22px;top:347.89px;font-size:11.30px;color:#555;transform-origin:100% 0;transform:scaleX(1.0000)">3</div>
<div class="b" style="left:0;top:396.09px;width:605px;height:1px;background:#f6f6f6"></div>
<svg style="left:10.3px;top:377.29px" width="5" height="8"><polygon points="0.5,0.5 4.5,4 0.5,7.5" fill="#999"/></svg>
<div class="b" style="left:26.9px;top:374.22px;width:112.10px;height:16px;overflow:hidden;">
<div class="t" style="left:0;top:2px;font-size:11.30px;color:#555;transform-origin:0 0;transform:scaleX(1.0)">Bernhard, Kutch and Lang</div></div>
<div class="t" style="left:366.74px;top:376.22px;font-size:11.30px;color:#555;transform-origin:100% 0;transform:scaleX(1.0000)">$1,510</div>
<div class="t" style="left:498.42px;top:376.22px;font-size:11.30px;color:#555;transform-origin:100% 0;transform:scaleX(1.0000)">3</div>
<div class="t" style="left:593.22px;top:376.22px;font-size:11.30px;color:#555;transform-origin:100% 0;transform:scaleX(1.0000)">1</div>
<svg style="left:10.3px;top:405.62px" width="5" height="8"><polygon points="0.5,0.5 4.5,4 0.5,7.5" fill="#999"/></svg>
<div class="b" style="left:26.9px;top:402.55px;width:112.10px;height:16px;overflow:hidden;">
<div class="t" style="left:0;top:2px;font-size:11.30px;color:#555;transform-origin:0 0;transform:scaleX(1.0)">Mann-Wisoky</div></div>
<div class="t" style="left:366.74px;top:404.55px;font-size:11.30px;color:#555;transform-origin:100% 0;transform:scaleX(1.0000)">$1,498</div>
<div class="t" style="left:498.42px;top:404.55px;font-size:11.30px;color:#555;transform-origin:100% 0;transform:scaleX(1.0000)">6</div>
<div class="t" style="left:593.22px;top:404.55px;font-size:11.30px;color:#555;transform-origin:100% 0;transform:scaleX(1.0000)">2</div>
</div>
<div class="b" style="left:814.20px;top:627.40px;width:7.60px;height:404.60px;background:#f0f0f0;"></div>
<div class="b" style="left:814.60px;top:627.60px;width:6.80px;height:27.10px;background:#c6c6c6;"></div>
<svg width="1536" height="1097"><polygon points="896.9,681.7 902.1,676.5 913.5,673.3 927.1,675.9 943.8,679.1 958.3,676.5 966.7,678.5 979.2,679.6 983.3,682.7 1000.0,683.8 1014.6,683.8 1022.9,685.8 1030.0,684.0 1040.0,680.0 1048.0,688.0 1056.0,694.0 1064.0,697.0 1070.0,699.0 1073.0,704.0 1076.0,710.0 1078.5,716.0 1081.0,722.0 1076.0,724.0 1080.0,728.0 1085.0,731.6 1080.0,734.0 1068.0,732.0 1062.0,738.0 1055.4,744.7 1050.0,750.0 1043.9,757.8 1040.0,762.0 1037.3,767.7 1040.6,775.9 1038.0,776.0 1034.1,770.9 1024.2,767.7 1012.7,770.9 1014.4,784.0 1024.2,785.7 1029.1,782.4 1030.8,793.9 1036.0,799.0 1044.0,803.6 1040.0,806.0 1036.5,805.0 1026.3,797.0 1014.6,790.4 1000.0,784.6 989.8,772.6 981.6,766.0 971.7,756.2 968.8,740.0 968.8,731.7 962.5,725.4 954.2,717.1 945.8,707.7 937.5,703.5 929.2,701.5 924.0,700.4 911.5,710.8 893.8,720.2 913.5,706.7 904.2,706.7 895.8,703.5 900.0,698.3 899.0,694.2 905.2,687.9 895.8,687.9" fill="#e6e5a6" stroke="#c4c4c4" stroke-width="0.80" stroke-linejoin="round"/><polygon points="1016.5,693.4 1023.8,694.3 1030.0,688.0 1037.5,679.7 1046.6,681.5 1042.0,694.3 1051.2,696.0 1063.0,700.0 1069.4,702.0 1060.3,703.5 1046.6,704.5 1043.9,712.5 1040.2,721.6 1031.1,716.2 1023.8,711.6 1017.4,705.2" fill="#fff" stroke="#c4c4c4" stroke-width="0.70" stroke-linejoin="round"/><polygon points="1014.7,640.5 1023.8,635.0 1042.0,631.8 1072.1,633.2 1060.3,643.2 1051.2,650.5 1042.0,655.0 1030.0,654.0 1020.0,650.0" fill="#e6e5a6" stroke="#c4c4c4" stroke-width="0.80" stroke-linejoin="round"/><polygon points="1004.0,649.0 1012.0,646.0 1016.0,652.0 1010.0,656.0" fill="#e6e5a6" stroke="#c4c4c4" stroke-width="0.80" stroke-linejoin="round"/><polygon points="1022.0,657.5 1040.0,656.0 1046.0,660.0 1036.0,664.0 1024.0,662.5" fill="#e6e5a6" stroke="#c4c4c4" stroke-width="0.80" stroke-linejoin="round"/><polygon points="1023.8,666.0 1037.5,666.0 1046.6,669.0 1060.3,676.0 1071.2,685.2 1069.4,694.3 1060.3,694.3 1051.2,688.8 1046.6,681.5 1037.5,679.7 1031.1,676.0 1025.6,672.4" fill="#e6e5a6" stroke="#c4c4c4" stroke-width="0.80" stroke-linejoin="round"/><polygon points="965.0,663.0 974.0,655.5 984.0,653.5 987.0,662.0 980.0,671.5 967.0,672.0" fill="#e6e5a6" stroke="#c4c4c4" stroke-width="0.80" stroke-linejoin="round"/><polygon points="989.0,663.0 1004.0,658.5 1014.0,662.0 1013.5,672.0 1005.0,680.0 989.0,677.0" fill="#e6e5a6" stroke="#c4c4c4" stroke-width="0.80" stroke-linejoin="round"/><polygon points="1016.0,666.0 1022.0,667.5 1024.5,675.0 1018.0,679.0" fill="#e6e5a6" stroke="#c4c4c4" stroke-width="0.80" stroke-linejoin="round"/><polygon points="988.0,648.0 1000.0,645.0 1011.0,645.5 1009.0,652.5 994.0,654.0" fill="#e6e5a6" stroke="#c4c4c4" stroke-width="0.80" stroke-linejoin="round"/><polygon points="975.0,652.5 984.0,650.0 987.0,655.5 979.0,657.5" fill="#e6e5a6" stroke="#c4c4c4" stroke-width="0.80" stroke-linejoin="round"/><polygon points="1000.0,683.5 1010.0,683.0 1014.0,684.0 1004.0,685.0" fill="#e6e5a6" stroke="#c4c4c4" stroke-width="0.80" stroke-linejoin="round"/><polygon points="1055.2,649.3 1072.7,635.2 1096.2,630.5 1119.6,628.8 1137.2,634.1 1153.6,636.4 1138.4,645.8 1143.0,655.2 1137.2,669.2 1131.3,678.6 1113.8,688.0 1104.4,695.0 1102.0,703.2 1095.0,699.7 1088.0,690.3 1084.5,678.6 1081.0,666.9 1076.3,657.5 1061.0,655.2" fill="#e6e5a6" stroke="#c4c4c4" stroke-width="0.80" stroke-linejoin="round"/><polygon points="1034.0,779.5 1046.0,780.5 1058.0,784.5 1061.0,787.0 1050.0,786.0 1036.0,782.0" fill="#e6e5a6" stroke="#c4c4c4" stroke-width="0.60" stroke-linejoin="round"/><polygon points="1062.0,787.5 1070.0,788.0 1068.0,790.0 1062.0,789.5" fill="#e6e5a6" stroke="#c4c4c4" stroke-width="0.50" stroke-linejoin="round"/><polygon points="1045.2,802.1 1055.4,798.5 1071.5,800.6 1087.5,812.3 1091.9,819.6 1113.8,825.4 1116.7,831.3 1108.0,847.3 1103.6,857.5 1093.4,863.4 1081.7,878.0 1068.6,889.6 1064.2,901.3 1058.4,914.4 1064.2,918.8 1055.4,920.3 1049.6,910.1 1049.6,895.5 1054.0,872.1 1056.9,850.2 1048.1,840.0 1040.9,828.4 1040.9,816.7" fill="#e6e5a6" stroke="#c4c4c4" stroke-width="0.80" stroke-linejoin="round"/><polygon points="1162.8,756.4 1172.4,753.7 1190.2,753.7 1192.9,759.1 1203.8,764.6 1212.0,761.9 1229.8,764.6 1233.9,774.2 1243.5,793.3 1247.6,798.8 1258.5,798.8 1253.1,812.5 1242.1,820.7 1239.4,827.5 1240.8,843.9 1232.6,850.8 1229.8,863.1 1220.2,874.0 1205.2,876.7 1197.0,859.0 1192.9,843.9 1195.6,835.7 1188.8,819.3 1188.8,811.1 1177.9,807.0 1160.1,809.7 1147.8,798.8 1145.0,783.8 1150.5,771.5 1158.7,761.9" fill="#fff" stroke="#bdbdbd" stroke-width="1.00" stroke-linejoin="round"/><polygon points="1246.2,846.7 1255.8,838.5 1253.1,857.6 1249.0,860.3" fill="#fff" stroke="#bdbdbd" stroke-width="0.90" stroke-linejoin="round"/><polygon points="1158.6,752.4 1158.6,741.5 1165.0,740.5 1169.0,738.0 1167.9,731.0 1171.0,723.5 1178.0,722.0 1186.5,718.3 1199.5,716.0 1201.6,707.4 1204.0,712.0 1210.2,716.0 1221.0,712.6 1221.0,707.0 1216.0,704.0 1214.5,696.7 1216.7,688.1 1210.0,692.0 1206.0,696.7 1208.1,707.4 1199.5,713.9 1188.7,709.6 1182.3,701.0 1190.9,686.0 1203.0,679.0 1216.7,675.2 1230.0,676.0 1242.5,679.5 1236.0,684.0 1233.9,686.0 1240.0,687.0 1246.8,686.0 1268.2,677.4 1276.3,679.6 1287.2,679.6 1288.7,668.7 1302.7,670.3 1314.6,662.7 1327.7,656.1 1344.1,652.8 1362.2,659.4 1352.3,667.6 1378.6,667.6 1391.7,672.5 1408.1,665.9 1429.5,674.1 1454.1,677.4 1470.5,680.7 1489.3,687.3 1482.0,690.0 1470.5,697.1 1462.0,697.0 1447.5,698.8 1445.9,702.0 1441.0,715.2 1434.4,726.6 1432.7,718.4 1434.4,708.6 1429.5,703.7 1418.0,705.3 1408.1,711.9 1401.6,716.8 1403.2,725.0 1408.1,731.6 1404.8,741.4 1396.6,744.7 1378.6,751.3 1386.8,759.5 1380.0,763.0 1375.3,762.7 1377.0,775.9 1372.9,769.8 1358.1,779.7 1351.5,784.6 1354.8,792.8 1350.0,798.0 1348.3,815.0 1342.0,810.0 1338.4,801.0 1334.0,798.0 1331.9,789.5 1325.3,779.7 1317.1,784.6 1308.9,792.8 1302.3,802.7 1298.0,792.0 1294.1,781.3 1285.0,778.0 1274.4,774.8 1272.8,778.0 1269.5,786.2 1259.9,789.2 1247.0,797.0 1243.5,793.3 1233.9,774.2 1229.9,758.6 1231.4,757.0 1233.0,753.9 1220.6,750.8 1220.6,747.7 1214.4,753.9 1211.3,747.7 1205.1,738.4 1202.0,747.7 1205.1,752.4 1202.0,753.9 1198.9,749.3 1192.7,741.5 1186.5,736.9 1177.2,741.5 1175.6,747.7 1167.9,752.4" fill="#80b8ea" stroke="#80b8ea" stroke-width="0.50" stroke-linejoin="round"/><polygon points="1220.6,738.4 1229.9,735.3 1242.2,738.4 1240.7,744.6 1226.8,744.6 1222.1,743.1" fill="#fff" stroke="#fff" stroke-width="0.50" stroke-linejoin="round"/><polygon points="1253.1,735.3 1260.8,733.8 1262.4,741.5 1263.9,752.4 1259.3,752.4 1254.6,744.6" fill="#fff" stroke="#fff" stroke-width="0.50" stroke-linejoin="round"/><polygon points="1254.4,767.3 1260.0,772.0 1266.7,775.6 1262.0,776.0 1256.0,771.0" fill="#fff" stroke="#fff" stroke-width="0.50" stroke-linejoin="round"/><polygon points="1192.7,643.0 1210.0,641.0 1217.5,646.0 1212.0,654.8 1200.0,652.0" fill="#80b8ea" stroke="#80b8ea" stroke-width="0.50" stroke-linejoin="round"/><polygon points="1260.8,670.3 1268.0,660.0 1287.2,654.8 1275.0,662.0 1265.0,672.0" fill="#80b8ea" stroke="#80b8ea" stroke-width="0.50" stroke-linejoin="round"/><polygon points="1324.5,641.0 1335.0,639.7 1349.0,648.0 1340.0,649.5" fill="#80b8ea" stroke="#80b8ea" stroke-width="0.50" stroke-linejoin="round"/><polygon points="1401.6,658.0 1422.9,661.0 1410.0,661.5" fill="#80b8ea" stroke="#80b8ea" stroke-width="0.50" stroke-linejoin="round"/><polygon points="1160.0,712.0 1165.0,705.0 1172.0,708.0 1177.2,720.0 1175.0,726.0 1165.0,724.0" fill="#80b8ea" stroke="#80b8ea" stroke-width="0.50" stroke-linejoin="round"/><polygon points="1156.0,715.0 1161.0,713.0 1162.0,721.0 1157.0,722.0" fill="#80b8ea" stroke="#80b8ea" stroke-width="0.50" stroke-linejoin="round"/><polygon points="1409.8,744.7 1408.1,751.3 1401.6,757.8 1391.7,764.4 1388.4,762.7 1396.6,756.2 1404.8,748.0" fill="#80b8ea" stroke="#80b8ea" stroke-width="0.50" stroke-linejoin="round"/><polygon points="1409.8,736.5 1419.6,734.8 1421.3,739.8 1414.7,743.0" fill="#80b8ea" stroke="#80b8ea" stroke-width="0.50" stroke-linejoin="round"/><polygon points="1409.8,718.4 1413.0,721.7 1412.2,734.8 1409.8,733.2" fill="#80b8ea" stroke="#80b8ea" stroke-width="0.50" stroke-linejoin="round"/><polygon points="1331.9,807.6 1340.0,814.0 1349.9,825.6 1346.0,826.0 1336.0,815.0" fill="#80b8ea" stroke="#80b8ea" stroke-width="0.50" stroke-linejoin="round"/><polygon points="1349.9,826.5 1384.4,831.0 1384.0,833.0 1350.0,829.0" fill="#80b8ea" stroke="#80b8ea" stroke-width="0.50" stroke-linejoin="round"/><polygon points="1354.8,815.0 1362.0,806.0 1371.2,806.0 1370.0,820.0 1360.0,824.0" fill="#80b8ea" stroke="#80b8ea" stroke-width="0.50" stroke-linejoin="round"/><polygon points="1375.0,813.0 1383.0,811.0 1380.0,825.0 1375.0,822.0" fill="#80b8ea" stroke="#80b8ea" stroke-width="0.50" stroke-linejoin="round"/><polygon points="1374.0,785.0 1380.0,788.0 1384.4,807.6 1378.0,800.0" fill="#80b8ea" stroke="#80b8ea" stroke-width="0.50" stroke-linejoin="round"/><polygon points="1392.0,822.0 1408.0,819.0 1409.0,832.0 1395.0,828.0" fill="#80b8ea" stroke="#80b8ea" stroke-width="0.50" stroke-linejoin="round"/><polygon points="1135.0,690.0 1143.0,688.0 1151.5,690.0 1150.0,694.0 1140.0,695.0" fill="#80b8ea" stroke="#80b8ea" stroke-width="0.50" stroke-linejoin="round"/><polygon points="1305.6,801.0 1310.5,803.0 1309.0,807.6 1306.0,806.0" fill="#80b8ea" stroke="#80b8ea" stroke-width="0.50" stroke-linejoin="round"/><polygon points="1364.7,851.9 1363.0,865.0 1366.3,876.5 1384.4,873.2 1402.4,878.1 1407.3,884.7 1422.1,883.0 1428.6,865.0 1420.4,851.9 1410.6,833.8 1404.0,842.0 1397.5,837.1 1387.6,838.7 1377.8,847.0" fill="#fff" stroke="#bdbdbd" stroke-width="1.00" stroke-linejoin="round"/><polygon points="1409.0,819.0 1418.0,823.0 1425.4,832.2 1409.0,832.0" fill="#fff" stroke="#bdbdbd" stroke-width="0.90" stroke-linejoin="round"/><polygon points="1413.9,888.0 1420.4,889.0 1419.0,894.5 1414.0,893.0" fill="#fff" stroke="#bdbdbd" stroke-width="0.80" stroke-linejoin="round"/><polygon points="1461.0,877.0 1471.3,884.0 1462.0,896.0 1451.0,901.0 1452.0,896.0 1462.0,888.0" fill="#fff" stroke="#bdbdbd" stroke-width="0.80" stroke-linejoin="round"/></svg>
<div class="t" style="top:714.63px;font-size:11.30px;color:#222;left:974.12px;transform-origin:50% 0;transform:scaleX(0.9490);">13,980</div>
<div class="t" style="top:835.53px;font-size:11.30px;color:#222;left:1062.12px;transform-origin:50% 0;transform:scaleX(0.9490);">13,747</div>
<div class="t" style="top:708.73px;font-size:11.30px;color:#1d2b45;left:1216.32px;transform-origin:50% 0;transform:scaleX(0.9635);">20,783</div>
<div class="t" style="top:722.83px;font-size:11.30px;color:#1d2b45;left:1314.12px;transform-origin:50% 0;transform:scaleX(0.9722);">20,872</div>
<div class="t" style="top:548.19px;font-size:13.00px;color:#222;left:1120.40px;transform-origin:0 0;transform:scaleX(1.0064);">Customers by Region</div>
<div class="b" style="left:1398.60px;top:539.90px;width:109.30px;height:26.90px;background:#fff;border:1.5px solid #6f8ec4;border-radius:6px;"></div>
<div class="t" style="top:548.48px;font-size:11.00px;color:#555;left:1407.10px;transform-origin:0 0;transform:scaleX(1.0376);"># Customers</div>
<svg style="left:1489.25px;top:551.20px" width="7.50" height="4.20"><polygon points="0,0 7.50,0 3.75,4.20" fill="#333"/></svg>
<div class="b" style="left:1092.50px;top:987.90px;width:137.70px;height:10.20px;background:linear-gradient(90deg,#ece98e 0%,#e4e694 30%,#c5dfa5 58%,#8ec8bf 100%);"></div>
<div class="b" style="left:1230.20px;top:987.90px;width:1.00px;height:10.20px;background:#fff;"></div>
<div class="b" style="left:1231.20px;top:987.90px;width:44.80px;height:10.20px;background:#7cb6ea;"></div>
<div class="t" style="top:1006.73px;font-size:10.00px;color:#aaa;left:1095.60px;transform-origin:0 0;">12...</div>
<div class="t" style="top:1006.73px;font-size:10.00px;color:#aaa;left:1130.60px;transform-origin:0 0;">15k</div>
<div class="t" style="top:1006.73px;font-size:10.00px;color:#aaa;left:1171.60px;transform-origin:0 0;">17.5k</div>
<div class="t" style="top:1006.73px;font-size:10.00px;color:#aaa;left:1221.80px;transform-origin:0 0;">20k</div>
<div class="t" style="top:1006.73px;font-size:10.00px;color:#aaa;left:1255.20px;transform-origin:0 0;">22...</div>
<div class="t" style="top:1056.68px;font-size:11.00px;color:#333;left:816.46px;transform-origin:50% 0;transform:scaleX(1.0501);">Powered by</div>
<div class="b" style="left:795px;top:1069.5px;width:102px;height:19px;background:rgba(255,255,255,0.55);filter:blur(1.5px)"></div>
<svg style="left:797px;top:1071px" width="20" height="17"><path d="M7.5,1 C2.5,1 1,4 1,8.2 C1,12.4 2.5,15.5 7.5,15.5 L7.5,12.6 C5.2,12.6 4.3,11 4.3,8.2 C4.3,5.4 5.2,3.9 7.5,3.9 Z" fill="#141414"/><path d="M9.5,1 C14.5,1 16.5,4 16.5,8.2 C16.5,12.4 14.5,15.5 9.5,15.5 L9.5,12.6 C11.8,12.6 13.2,11 13.2,8.2 C13.2,5.4 11.8,3.9 9.5,3.9 Z" fill="#d33a3a"/><rect x="8" y="5.5" width="1.6" height="5.5" fill="#d33a3a"/></svg>
<div class="t" style="top:1072.87px;font-size:15.50px;color:#2a2a2a;left:817.40px;transform-origin:0 0;transform:scaleX(1.0308);">CLIC</div>
<div class="t" style="top:1072.87px;font-size:15.50px;color:#141414;font-weight:700;left:854.00px;transform-origin:0 0;transform:scaleX(0.9571);">DATA</div>
</body></html>
